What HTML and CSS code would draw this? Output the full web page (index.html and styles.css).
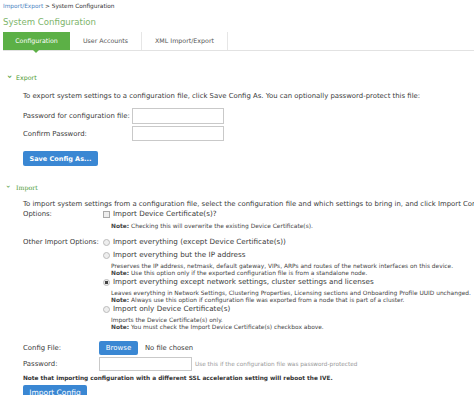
FILE: index.html
```html
<!DOCTYPE html>
<html>
<head>
<meta charset="utf-8">
<link rel="stylesheet" href="styles.css">
</head>
<body>
<div class="crumb"><a class="link">Import/Export</a> &gt; System Configuration</div>
<div class="title">System Configuration</div>
<div class="tabs">
  <div class="tab active">Configuration</div>
  <div class="tab">User Accounts</div>
  <div class="tab">XML Import/Export</div>
</div>

<div class="section-head"><span class="chev">&#8250;</span>Export</div>
<div class="body">
  <p class="para">To export system settings to a configuration file, click Save Config As. You can optionally password-protect this file:</p>
  <div class="frow first"><span class="flabel">Password for configuration file:</span><span class="input w92 h16"></span></div>
  <div class="frow second"><span class="flabel">Confirm Password:</span><span class="input w92 h15"></span></div>
  <div class="btn save">Save Config As...</div>
</div>

<div class="section-head imp"><span class="chev">&#8250;</span>Import</div>
<div class="body">
  <p class="para para2">To import system settings from a configuration file, select the configuration file and which settings to bring in, and click Import Config.</p>
  <div class="opts first-opts">
    <div class="olabel">Options:</div>
    <div class="ocol">
      <div class="choice"><span class="box"></span>Import Device Certificate(s)?</div>
      <div class="note n1"><b>Note:</b> Checking this will overwrite the existing Device Certificate(s).</div>
    </div>
  </div>
  <div class="opts other">
    <div class="olabel">Other Import Options:</div>
    <div class="ocol">
      <div class="choice"><span class="radio"></span>Import everything (except Device Certificate(s))</div>
      <div class="choice c2"><span class="radio"></span>Import everything but the IP address</div>
      <div class="note n2">Preserves the IP address, netmask, default gateway, VIPs, ARPs and routes of the network interfaces on this device.</div>
      <div class="note"><b>Note:</b> Use this option only if the exported configuration file is from a standalone node.</div>
      <div class="choice c3"><span class="radio on"></span>Import everything except network settings, cluster settings and licenses</div>
      <div class="note n2">Leaves everything in Network Settings, Clustering Properties, Licensing sections and Onboarding Profile UUID unchanged.</div>
      <div class="note"><b>Note:</b> Always use this option if configuration file was exported from a node that is part of a cluster.</div>
      <div class="choice c3"><span class="radio"></span>Import only Device Certificate(s)</div>
      <div class="note n2">Imports the Device Certificate(s) only.</div>
      <div class="note"><b>Note:</b> You must check the Import Device Certificate(s) checkbox above.</div>
    </div>
  </div>
  <div class="frow file"><span class="flabel2">Config File:</span><span class="btn browse">Browse</span><span class="nofile">No file chosen</span></div>
  <div class="frow pw"><span class="flabel2">Password:</span><span class="input w93 h14"></span><span class="hint">Use this if the configuration file was password-protected</span></div>
  <div class="warn">Note that importing configuration with a different SSL acceleration setting will reboot the IVE.</div>
  <div class="btn importb">Import Config</div>
</div>
</body>
</html>
```
FILE: styles.css
```css
html, body { margin: 0; padding: 0; background: #fff; overflow: hidden; }
body {
  width: 474px; height: 395px;
  font-family: "DejaVu Sans", Verdana, sans-serif;
  font-size: 6.9px;
  color: #3a3a3a;
}
.crumb { height: 12px; line-height: 12px; padding-left: 3px; font-size: 5.8px; color: #333; }
.link { color: #4a7fc1; }
.title { margin-top: 3px; padding-top: 1px; height: 11px; line-height: 12px; padding-left: 3px; font-size: 8.6px; color: #7db56b; }
.tabs {
  margin-top: 5px; height: 18px; display: flex;
  border-bottom: 1px solid #e2e2e2; margin-left: 3px;
}
.tab {
  position: relative;
  height: 18px; line-height: 18px; text-align: center; color: #555;
  font-size: 6.3px; border-right: 1px solid #e6e6e6;
}
.tab:nth-child(1) { width: 67px; }
.tab:nth-child(2) { width: 71px; }
.tab:nth-child(3) { width: 85px; }
.tab.active { background: #5cb046; color: #fff; border-right: none; }
.tab.active::after {
  content: ""; position: absolute; left: 30px; top: 18px;
  border-left: 3px solid transparent; border-right: 3px solid transparent;
  border-top: 3px solid #5cb046;
}
.section-head {
  margin-top: 22px; height: 10px; line-height: 10px; padding-left: 6px;
  color: #4c9a33; font-size: 6.3px; display: flex; align-items: center;
}
.section-head.imp { margin-top: 17px; font-family: "DejaVu Serif", serif; }
.chev { display: inline-block; transform: rotate(90deg); font-weight: bold; font-size: 8px; width: 6px; margin-right: 4px; }
.body { padding-left: 23px; }
.para { margin: 8px 0 0; height: 10px; line-height: 10px; white-space: nowrap; }
.para.para2 { margin-top: 6px; }
.frow { display: flex; align-items: center; }
.frow.first { margin-top: 7px; }
.frow.second { margin-top: 2px; }
.flabel { width: 109px; white-space: nowrap; }
.input { display: inline-block; border: 1px solid #c9c9c9; box-sizing: border-box; background: #fff; }
.w92 { width: 92px; } .w93 { width: 93px; }
.h16 { height: 16px; } .h15 { height: 15px; } .h14 { height: 14px; }
.btn {
  display: inline-flex; align-items: center; justify-content: center;
  background: #3a87d3; color: #fff; border-radius: 2px; box-sizing: border-box;
}
.save { margin-top: 10px; width: 75px; height: 15px; font-size: 6.5px; font-weight: bold; }
.opts { display: flex; }
.first-opts { margin-top: 0; }
.olabel { width: 80px; line-height: 10px; white-space: nowrap; }
.ocol { display: flex; flex-direction: column; padding-left: 8px; }
.choice { display: flex; align-items: center; height: 10px; line-height: 10px; font-size: 7.2px; white-space: nowrap; }
.box { width: 5px; height: 5px; border: 1px solid #aaa; background: #eee; margin-right: 3px; margin-left: -8px; flex: none; }
.radio { width: 5px; height: 5px; border: 1px solid #bbb; border-radius: 50%; background: #eee; margin-right: 3px; margin-left: -8px; flex: none; }
.radio.on { background: radial-gradient(circle, #444 0 1.5px, #eee 2px); }
.note { font-size: 5.9px; line-height: 7px; height: 7px; color: #444; white-space: nowrap; }
.note.n1 { margin-top: 4px; }
.other { margin-top: 7px; }
.choice.c2 { margin-top: 3px; }
.note.n2 { margin-top: 3px; }
.choice.c3 { margin-top: 0; }
.frow.file { margin-top: 10px; height: 14px; }
.flabel2 { width: 76px; }
.browse { width: 39px; height: 14px; font-size: 7px; }
.nofile { margin-left: 7px; font-size: 6.8px; }
.frow.pw { margin-top: 2px; }
.hint { margin-left: 3px; font-size: 5.75px; color: #999; white-space: nowrap; }
.warn { margin-top: 3px; font-weight: bold; font-size: 5.8px; height: 8px; line-height: 8px; color: #333; white-space: nowrap; }
.importb { margin-top: 3px; width: 64px; height: 14px; font-size: 7.5px; }
```
